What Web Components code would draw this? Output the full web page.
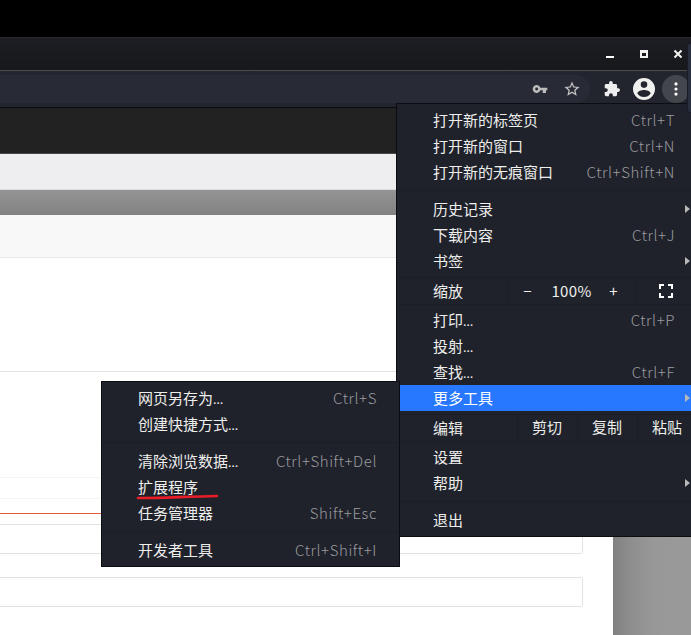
<!DOCTYPE html>
<html lang="zh-CN">
<head>
<meta charset="utf-8">
<title>Browser menu</title>
<style>
html,body{margin:0;height:100%;overflow:hidden}
body{font:15px/26px "Noto Sans CJK SC",sans-serif;color:#eeeeec;background:#000}
browser-window{--menu:#20222b}
app-menu.main{left:396px;top:103px;width:302px}
app-menu.sub{left:101px;top:381px;width:297px;z-index:2}
app-menu.main{--end:24px}
</style>
</head>
<body>
<browser-window>
  <title-bar slot="title"></title-bar>
  <tool-bar slot="tools"></tool-bar>
  <web-page slot="page"></web-page>
  <app-menu class="main">
    <menu-item keys="Ctrl+T">打开新的标签页</menu-item>
    <menu-item keys="Ctrl+N">打开新的窗口</menu-item>
    <menu-item keys="Ctrl+Shift+N">打开新的无痕窗口</menu-item>
    <menu-rule></menu-rule>
    <menu-item arrow>历史记录</menu-item>
    <menu-item keys="Ctrl+J">下载内容</menu-item>
    <menu-item arrow>书签</menu-item>
    <zoom-row></zoom-row>
    <menu-item keys="Ctrl+P" more>打印</menu-item>
    <menu-item more>投射</menu-item>
    <menu-item keys="Ctrl+F" more>查找</menu-item>
    <menu-item arrow active>更多工具</menu-item>
    <edit-row></edit-row>
    <menu-item>设置</menu-item>
    <menu-item arrow>帮助</menu-item>
    <menu-rule></menu-rule>
    <menu-item>退出</menu-item>
  </app-menu>
  <app-menu class="sub">
    <menu-item keys="Ctrl+S" more>网页另存为</menu-item>
    <menu-item more>创建快捷方式</menu-item>
    <menu-rule></menu-rule>
    <menu-item keys="Ctrl+Shift+Del" more>清除浏览数据</menu-item>
    <menu-item marked>扩展程序</menu-item>
    <menu-item keys="Shift+Esc">任务管理器</menu-item>
    <menu-rule></menu-rule>
    <menu-item keys="Ctrl+Shift+I">开发者工具</menu-item>
  </app-menu>
</browser-window>
<script>
const define = (name, html, setup) => customElements.define(name, class extends HTMLElement {
  constructor() {
    super();
    this.attachShadow({mode: 'open'}).innerHTML = html;
  }
  connectedCallback() { if (setup) setup(this, this.shadowRoot); }
});

define('browser-window', `<style>
:host{display:flex;flex-direction:column;position:relative;width:691px;height:635px;overflow:hidden;box-sizing:border-box;padding-top:37px;background:#000}
.edge{position:absolute;left:687px;top:43px;width:8px;height:70px;box-sizing:border-box;border:1px solid #191c28;border-radius:3px;background:#2a2f40;z-index:3}
</style><slot name="title"></slot><slot name="tools"></slot><slot name="page"></slot><slot></slot><div class="edge"></div>`);

define('title-bar', `<style>
:host{display:flex;justify-content:flex-end;height:34px;box-sizing:border-box;border-top:1px solid #292a2f;border-bottom:1px solid #4c4c4d;background:linear-gradient(#1c1e24,#17181b)}
svg{display:block;width:90px;height:32px}
</style><svg viewBox="601 38 90 32" shape-rendering="crispEdges"><path d="M606 56h8v2h-8z" fill="#fff"/><path d="M640 50h8v8h-8zM642 53v3h4v-3z" fill="#f2f2f0" fill-rule="evenodd"/><path d="M674.5 50.5l7 7M681.5 50.5l-7 7" stroke="#f2f2f0" stroke-width="2" shape-rendering="auto"/></svg>`);

define('tool-bar', `<style>
:host{display:flex;align-items:center;height:37px;box-sizing:border-box;border-bottom:1px solid #090a0e;background:#22252e}
.box{display:flex;flex:none;align-items:center;justify-content:flex-end;gap:16px;width:590px;height:28px;box-sizing:border-box;padding-right:10px;border-radius:0 14px 14px 0;background:#282a36}
svg{display:block;flex:none}
.ext{margin-left:14px}.user{margin-left:12px}
.more{display:flex;flex:none;align-items:center;justify-content:center;width:28px;height:28px;border-radius:50%;background:#44464d;margin-left:6px}
</style>
<div class="box">
<svg width="16" height="16" viewBox="0 0 24 24" fill="#bcbcbc"><path d="M12.65 10A6 6 0 1 0 12.65 14H16v4h5v-4h2v-4zM7 14.2a2.2 2.2 0 1 1 0-4.4 2.2 2.2 0 0 1 0 4.4z"/></svg>
<svg width="16" height="16" viewBox="1.500 1.500 21 21" fill="#c6c6c6"><path d="M22 9.24l-7.19-.62L12 2 9.19 8.63 2 9.24l5.46 4.73L5.82 21 12 17.27 18.18 21l-1.63-7.03zM12 15.4l-3.76 2.27 1-4.28-3.32-2.88 4.38-.38L12 6.1l1.71 4.04 4.38.38-3.32 2.88 1 4.28z"/></svg>
</div>
<svg class="ext" width="16" height="16" viewBox="1 1 22 22" fill="#eee"><path d="M20.5 11H19V7c0-1.1-.9-2-2-2h-4V3.500a2.500 2.500 0 0 0-5 0V5H4c-1.100 0-1.990.900-1.990 2v3.800H3.500a2.700 2.700 0 0 1 0 5.400H2V20c0 1.100.900 2 2 2h3.800v-1.500a2.700 2.700 0 0 1 5.400 0V22H17c1.100 0 2-.900 2-2v-4h1.500a2.500 2.500 0 0 0 0-5z"/></svg>
<svg class="user" width="24" height="24" viewBox="1.100 1.100 21.800 21.800" fill="#f0f0ee"><path d="M12 2a10 10 0 1 0 0 20 10 10 0 0 0 0-20zm0 3a3 3 0 1 1 0 6 3 3 0 0 1 0-6zm0 14.200a7.200 7.200 0 0 1-6-3.220c.030-1.990 4-3.080 6-3.080s5.970 1.090 6 3.080a7.200 7.200 0 0 1-6 3.220z"/></svg>
<div class="more"><svg width="4" height="14" viewBox="0 0 4 14" fill="#fff"><circle cx="2" cy="1.900" r="1.600"/><circle cx="2" cy="7" r="1.600"/><circle cx="2" cy="12.100" r="1.600"/></svg></div>`);

define('web-page', `<style>
:host{display:flex;flex-direction:column;flex:1;min-height:0;overflow:hidden}
.nav{flex:none;height:45px;background:#222;border-bottom:1px solid #484848}
.tabs{flex:none;height:35px;background:#eeeef0;border-bottom:1px solid #dcdddf}
.shade{flex:none;height:25px;background:linear-gradient(#949494,#828282)}
.body{display:grid;grid-template-columns:613px 1fr;flex:1;min-height:0}
.back{background:linear-gradient(90deg,#818181,#8f8f8f 20px,#979797 38px,#999 55px)}
.panel{display:flex;flex-direction:column;background:#fff}
.panel>*{flex:none;box-sizing:border-box}
.head{height:43px;background:#f8f8f8;border-bottom:1px solid #e9e9e9}
.a{height:114px;border-bottom:1px solid #e4e4e4}
.b{height:106px;border-bottom:1px solid #f5f5f5}
.c{height:21px;border-bottom:1px solid #f5f5f5}
.d{height:15px;border-bottom:1px solid #e25c38}
.field{width:583px;height:30px;margin-top:10px;border:1px solid #e2e2e2;border-left:0;border-radius:0 2px 2px 0}
.field+.field{margin-top:23px}
</style><div class="nav"></div><div class="tabs"></div><div class="shade"></div>
<div class="body"><div class="panel"><div class="head"></div><div class="a"></div><div class="b"></div><div class="c"></div><div class="d"></div><div class="field"></div><div class="field"></div></div><div class="back"></div></div>`);

define('app-menu', `<style>
:host{display:flex;flex-direction:column;position:absolute;padding:3px 0;border:1px solid #0c0d12;background:var(--menu)}
</style><slot></slot>`);

define('menu-rule', `<style>:host{display:flex;align-items:center;height:11px}i{flex:1;height:1px;background:#1c1e26}</style><i></i>`);

define('menu-item', `<style>
:host{display:flex;justify-content:space-between;position:relative;height:26px;padding:0 var(--end,22px) 0 36px;white-space:nowrap}
:host([active]){background:#2777ff;color:#fff}
.keys{color:#9a9b9f;font-weight:300;letter-spacing:.58px}
.dots{font-family:"Noto Sans",sans-serif;font-size:13px}
svg{position:absolute;display:none}
:host([arrow]) .arrow{display:block;left:288px;top:8px}
:host([marked]) .mark{display:block;left:34px;top:18px}
</style><span><slot></slot><span class="dots"></span></span><span class="keys"></span>
<svg class="arrow" width="5" height="10"><path d="M0 1v8l5-4z" fill="#b9bab8"/></svg>
<svg class="mark" width="84" height="10"><path d="M2 6C20 6.500 50 4.500 81 4" fill="none" stroke="#e81d25" stroke-width="2.600" stroke-linecap="round"/></svg>`,
(el, root) => {
  root.querySelector('.keys').textContent = el.getAttribute('keys') || '';
  root.querySelector('.dots').textContent = el.hasAttribute('more') ? '…' : '';
});

define('zoom-row', `<style>
:host{display:grid;grid-template-columns:110px 129px 1fr;height:28px;box-sizing:border-box;margin:3px 0 2px;border:solid #1c1e26;border-width:1px 0}
span{padding-left:36px}
div{display:grid;grid-template-columns:39px 49px 35px;text-align:center;line-height:25px;letter-spacing:.33px;border:solid #1c1e26;border-width:0 1px}
b{font-weight:400}
svg{margin:6px 0 0 23px}
</style><span>缩放</span><div><b>−</b><b>100%</b><b>+</b></div>
<svg width="14" height="14"><path d="M1 5V1h4M9 1h4v4M13 9v4H9M5 13H1V9" fill="none" stroke="#fff" stroke-width="2"/></svg>`);

define('edit-row', `<style>
:host{display:grid;grid-template-columns:120px 60px 60px 60px;height:28px;box-sizing:border-box;margin:3px 0 2px;border:solid #1c1e26;border-width:1px 0}
span{padding-left:36px}
b{box-sizing:border-box;padding-right:1px;font-weight:400;line-height:24px;text-align:center;border-left:1px solid #1c1e26}
</style><span>编辑</span><b>剪切</b><b>复制</b><b>粘贴</b>`);
</script>
</body>
</html>
